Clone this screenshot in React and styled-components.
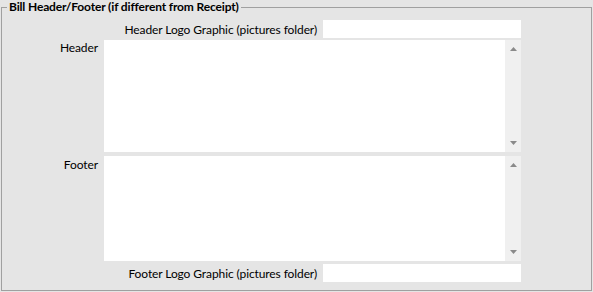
import React from 'react';
import styled, { createGlobalStyle } from 'styled-components';

const GlobalStyle = createGlobalStyle`
    html, body {
        margin: 0;
        padding: 0;
        background: #e5e5e5;
    }
    body {
        font-family: Lato, "Liberation Sans", Arial, sans-serif;
        font-size: 12px;
        letter-spacing: -0.1px;
        color: #000;
    }
`;

const Group = styled.fieldset`
    box-sizing: border-box;
    width: 591px;
    height: 291px;
    margin: 0 0 0 1px;
    padding: 6px 0 0 0;
    border: 1px solid #a0a0a0;
    min-width: 0;
`;

const Title = styled.legend`
    margin-left: 5px;
    padding: 0 2px;
    font-weight: bold;
    font-size: 12px;
    line-height: 14px;
    letter-spacing: -0.15px;
`;

const Rows = styled.div`
    display: flex;
    flex-direction: column;
`;

const Row = styled.div`
    display: grid;
    grid-template-columns: 96px 417px;
    column-gap: 6px;
    margin-top: ${p => p.$top || 0}px;
`;

const Label = styled.div`
    text-align: right;
    padding-top: ${p => p.$pad || 0}px;
    line-height: 14px;
    white-space: nowrap;
`;

const LogoLine = styled.div`
    grid-column: 2;
    display: flex;
    justify-content: flex-end;
    align-items: center;
    gap: 6px;
    height: 18px;
`;

const LogoInput = styled.input`
    box-sizing: border-box;
    width: 198px;
    height: 18px;
    margin: 0;
    padding: 0 3px;
    border: none;
    background: #fff;
    font: inherit;
    outline: none;
`;

const TextBox = styled.div`
    display: flex;
    height: ${p => p.$height}px;
`;

const Area = styled.textarea`
    flex: 1;
    margin: 0;
    padding: 2px;
    border: none;
    background: #fff;
    resize: none;
    overflow: hidden;
    font: inherit;
    outline: none;
`;

const ScrollBar = styled.div`
    width: 16px;
    background: #f0f0f0;
    display: flex;
    flex-direction: column;
    justify-content: space-between;
    align-items: center;
    padding: 7px 0;
    box-sizing: border-box;
`;

function Arrow({ down }) {
    return (
        <svg width="7" height="4" viewBox="0 0 7 4">
            <polygon
                points={down ? '0,0 7,0 3.5,4' : '0,4 7,4 3.5,0'}
                fill="#8a8a8a"
            />
        </svg>
    );
}

function MemoBox({ height }) {
    return (
        <TextBox $height={height}>
            <Area />
            <ScrollBar>
                <Arrow />
                <Arrow down />
            </ScrollBar>
        </TextBox>
    );
}

export default function App() {
    return (
        <>
            <GlobalStyle />
            <Group>
                <Title>Bill Header/Footer (if different from Receipt)</Title>
                <Rows>
                    <Row>
                        <LogoLine>
                            <span>Header Logo Graphic (pictures folder)</span>
                            <LogoInput />
                        </LogoLine>
                    </Row>
                    <Row $top={2}>
                        <Label $pad={1}>Header</Label>
                        <MemoBox height={112} />
                    </Row>
                    <Row $top={4}>
                        <Label $pad={2}>Footer</Label>
                        <MemoBox height={105} />
                    </Row>
                    <Row $top={3}>
                        <LogoLine>
                            <span>Footer Logo Graphic (pictures folder)</span>
                            <LogoInput />
                        </LogoLine>
                    </Row>
                </Rows>
            </Group>
        </>
    );
}
